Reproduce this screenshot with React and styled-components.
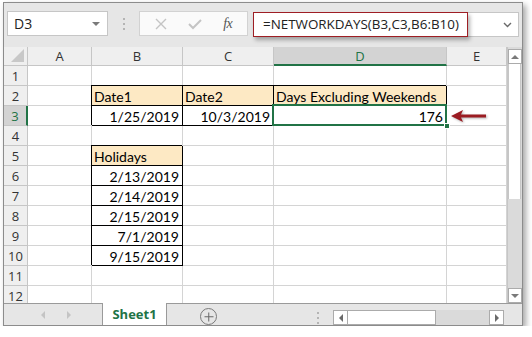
import React from 'react';
import styled, { createGlobalStyle } from 'styled-components';

const GlobalStyle = createGlobalStyle`
  html, body { margin: 0; padding: 0; background: #fff; }
  * { box-sizing: border-box; }
`;

const GREEN = '#217346';
const FILL = '#fde9c4';

const Window = styled.div`
  margin: 2px 0 0 3px;
  width: 520px;
  height: 324px;
  border: 1px solid #8c8c8c;
  background: #e6e6e6;
  box-shadow: 3px 3px 6px rgba(0, 0, 0, 0.35);
  display: flex;
  flex-direction: column;
  overflow: hidden;
  font-family: "Open Sans", sans-serif;
`;

const Toolbar = styled.div`
  height: 44px;
  flex: none;
  display: flex;
  align-items: flex-start;
  padding: 8px 3px 0 3px;
`;

const NameBox = styled.div`
  width: 101px;
  height: 25px;
  background: #fff;
  border: 1px solid #c6c6c6;
  display: flex;
  align-items: center;
  justify-content: space-between;
  padding: 0 7px 0 6px;
  font-size: 14px;
  color: #222;
`;

const Caret = styled.span`
  width: 0;
  height: 0;
  border-left: 4px solid transparent;
  border-right: 4px solid transparent;
  border-top: 4px solid #7a7a7a;
`;

const Grip = styled.div`
  width: 31px;
  height: 25px;
  display: flex;
  flex-direction: column;
  align-items: center;
  justify-content: center;
  gap: 3px;

  span {
    width: 2px;
    height: 2px;
    background: #b4b4b4;
  }
`;

const ButtonsBox = styled.div`
  width: 109px;
  height: 25px;
  background: #fafafa;
  border: 1px solid #d2d2d2;
  display: flex;
  align-items: center;
  justify-content: space-around;
  padding: 0 4px;
`;

const Fx = styled.span`
  font-family: "Liberation Serif", serif;
  font-style: italic;
  font-size: 14px;
  color: #555;
  letter-spacing: -0.5px;
`;

const FormulaBar = styled.div`
  margin-left: 5px;
  margin-top: 1px;
  flex: 1;
  height: 25px;
  background: #fff;
  border: 1px solid #c6c6c6;
  display: flex;
  align-items: center;
`;

const FormulaInput = styled.div`
  width: 215px;
  height: 25px;
  margin: -1px 0 0 -1px;
  border: 1px solid #9e1e24;
  box-shadow: 2px 3px 4px rgba(0, 0, 0, 0.3);
  background: #fff;
  display: flex;
  align-items: center;
  padding-left: 9px;
  font-size: 13.4px;
  color: #222;
  white-space: nowrap;
`;

const Chevron = styled.svg`
  margin-left: auto;
  margin-right: 6px;
`;

const GridArea = styled.div`
  height: 256px;
  flex: none;
  display: flex;
  background: #fff;
`;

const Sheet = styled.div`
  width: 503px;
  display: grid;
  grid-template-columns: 24px 64px 91px 91px 173px 60px;
  grid-template-rows: 19px;
  grid-auto-rows: 20px;
  align-content: start;
  overflow: hidden;
`;

const Corner = styled.div`
  background: #efefef;
  border-right: 1px solid #c6c6c6;
  border-bottom: 1px solid #c6c6c6;
  position: relative;

  &::after {
    content: '';
    position: absolute;
    right: 3px;
    bottom: 3px;
    width: 0;
    height: 0;
    border-left: 13px solid transparent;
    border-bottom: 13px solid #c8c8c8;
  }
`;

const ColHead = styled.div`
  background: ${p => (p.active ? '#d3d3d3' : '#efefef')};
  color: ${p => (p.active ? GREEN : '#333')};
  border-right: 1px solid #c6c6c6;
  border-bottom: ${p => (p.active ? `2px solid ${GREEN}` : '1px solid #c6c6c6')};
  display: flex;
  align-items: center;
  justify-content: center;
  font-size: 13px;
  padding-top: ${p => (p.active ? '1px' : '0')};
`;

const RowHead = styled.div`
  background: ${p => (p.active ? '#d3d3d3' : '#efefef')};
  color: ${p => (p.active ? GREEN : '#333')};
  border-right: ${p => (p.active ? `2px solid ${GREEN}` : '1px solid #c6c6c6')};
  border-bottom: 1px solid #c6c6c6;
  display: flex;
  align-items: center;
  justify-content: center;
  font-size: 13px;
`;

const Cell = styled.div`
  position: relative;
  background: ${p => (p.fill ? FILL : '#fff')};
  border-right: 1px solid ${p => (p.box ? '#000' : '#d4d4d4')};
  border-bottom: 1px solid ${p => (p.box ? '#000' : '#d4d4d4')};
  box-shadow: ${p => (p.box ? '-1px -1px 0 0 #000' : 'none')};
  display: flex;
  align-items: center;
  justify-content: ${p => (p.right ? 'flex-end' : 'flex-start')};
  padding: 2px 3px 0 2px;
  font-family: Lato, "Open Sans", sans-serif;
  font-size: 14px;
  color: #000;
  white-space: nowrap;

  ${p =>
    p.selected &&
    `
    &::after {
      content: '';
      position: absolute;
      left: -2px;
      top: -2px;
      right: -1px;
      bottom: -1px;
      border: 2px solid ${GREEN};
      z-index: 2;
    }
  `}
`;

const FillHandle = styled.span`
  position: absolute;
  right: -4px;
  bottom: -4px;
  width: 6px;
  height: 6px;
  background: ${GREEN};
  border: 1px solid #fff;
  z-index: 3;
`;

const Arrow = styled.svg`
  position: absolute;
  left: 4px;
  top: 4px;
  z-index: 4;
  filter: drop-shadow(1px 1px 1px rgba(0, 0, 0, 0.3));
`;

const VScroll = styled.div`
  width: 15px;
  background: #dadada;
  border-left: 1px solid #c6c6c6;
  display: flex;
  flex-direction: column;
  padding: 2px 1px 0 0;
`;

const ScrollBtn = styled.div`
  flex: none;
  width: ${p => p.w || '14px'};
  height: ${p => p.h || '15px'};
  background: #fff;
  border: 1px solid #ababab;
  display: flex;
  align-items: center;
  justify-content: center;
`;

const VThumb = styled.div`
  height: 135px;
  background: #fff;
  border-left: 1px solid #c6c6c6;
  border-right: 1px solid #c6c6c6;
`;

const VTrack = styled.div`
  flex: 1;
`;

const TabBar = styled.div`
  flex: 1;
  display: flex;
`;

const NavArea = styled.div`
  width: 99px;
  border-top: 1px solid #9a9a9a;
  border-right: 1px solid #9a9a9a;
  display: flex;
  align-items: center;
  justify-content: center;
  gap: 22px;
  padding-left: 6px;
`;

const Tri = styled.span`
  width: 0;
  height: 0;
  border-top: 4px solid transparent;
  border-bottom: 4px solid transparent;
  ${p =>
    p.dir === 'left'
      ? `border-right: 4px solid ${p.color || '#c4c4c4'};`
      : `border-left: 4px solid ${p.color || '#c4c4c4'};`}
`;

const TriV = styled.span`
  width: 0;
  height: 0;
  border-left: 4px solid transparent;
  border-right: 4px solid transparent;
  ${p =>
    p.dir === 'up'
      ? 'border-bottom: 4px solid #7a7a7a;'
      : 'border-top: 4px solid #7a7a7a;'}
`;

const SheetTab = styled.div`
  width: 64px;
  background: #fff;
  border-right: 1px solid #9a9a9a;
  display: flex;
  align-items: center;
  justify-content: center;
  color: ${GREEN};
  font-weight: 700;
  font-size: 13px;
`;

const TabRest = styled.div`
  flex: 1;
  border-top: 1px solid #9a9a9a;
  display: flex;
  align-items: flex-start;
`;

const AddSheet = styled.div`
  margin: 4px 0 0 33px;
  width: 17px;
  height: 17px;
  border: 1px solid #7a7a7a;
  border-radius: 50%;
  position: relative;

  &::before,
  &::after {
    content: '';
    position: absolute;
    background: #6a6a6a;
    left: 50%;
    top: 50%;
    transform: translate(-50%, -50%);
  }
  &::before { width: 9px; height: 1.5px; }
  &::after { width: 1.5px; height: 9px; }
`;

const HGrip = styled.div`
  margin: 8px 0 0 100px;
  display: flex;
  flex-direction: column;
  gap: 3px;

  span {
    width: 2px;
    height: 2px;
    background: #b4b4b4;
  }
`;

const HScroll = styled.div`
  margin: 6px 0 0 14px;
  width: 171px;
  height: 15px;
  display: flex;
  background: #dadada;
`;

const HThumb = styled.div`
  width: 88px;
  background: #fff;
  border: 1px solid #ababab;
  border-left: none;
`;

const HTrack = styled.div`
  flex: 1;
`;

const rows = [
  { n: 1, cells: [{}, {}, {}, {}, {}] },
  {
    n: 2,
    cells: [
      {},
      { t: 'Date1', fill: true, box: true },
      { t: 'Date2', fill: true, box: true },
      { t: 'Days Excluding Weekends', fill: true, box: true },
      {},
    ],
  },
  {
    n: 3,
    cells: [
      {},
      { t: '1/25/2019', right: true, box: true },
      { t: '10/3/2019', right: true, box: true },
      { t: '176', right: true, box: true, selected: true },
      { arrow: true },
    ],
  },
  { n: 4, cells: [{}, {}, {}, {}, {}] },
  { n: 5, cells: [{}, { t: 'Holidays', fill: true, box: true }, {}, {}, {}] },
  ...['2/13/2019', '2/14/2019', '2/15/2019', '7/1/2019', '9/15/2019'].map((d, i) => ({
    n: 6 + i,
    cells: [{}, { t: d, right: true, box: true }, {}, {}, {}],
  })),
  { n: 11, cells: [{}, {}, {}, {}, {}] },
  { n: 12, cells: [{}, {}, {}, {}, {}] },
];

const columns = ['A', 'B', 'C', 'D', 'E'];

const App = () => (
  <>
    <GlobalStyle />
    <Window>
      <Toolbar>
        <NameBox>
          D3
          <Caret />
        </NameBox>
        <Grip>
          <span />
          <span />
          <span />
        </Grip>
        <ButtonsBox>
          <svg width="12" height="12" viewBox="0 0 12 12">
            <path d="M1 1 L11 11 M11 1 L1 11" stroke="#c4c4c4" strokeWidth="1.4" />
          </svg>
          <svg width="14" height="12" viewBox="0 0 14 12">
            <path d="M1 6 L5 10 L13 2" stroke="#c4c4c4" strokeWidth="2" fill="none" />
          </svg>
          <Fx>fx</Fx>
        </ButtonsBox>
        <FormulaBar>
          <FormulaInput>=NETWORKDAYS(B3,C3,B6:B10)</FormulaInput>
          <Chevron width="9" height="6" viewBox="0 0 9 6">
            <path d="M1 1 L4.5 4.5 L8 1" stroke="#6a6a6a" strokeWidth="1.4" fill="none" />
          </Chevron>
        </FormulaBar>
      </Toolbar>

      <GridArea>
        <Sheet>
          <Corner />
          {columns.map(c => (
            <ColHead key={c} active={c === 'D'}>
              {c}
            </ColHead>
          ))}
          {rows.map(row => (
            <React.Fragment key={row.n}>
              <RowHead active={row.n === 3}>{row.n}</RowHead>
              {row.cells.map((c, i) => (
                <Cell
                  key={i}
                  fill={c.fill}
                  box={c.box}
                  right={c.right}
                  selected={c.selected}
                >
                  {c.t}
                  {c.selected && <FillHandle />}
                  {c.arrow && (
                    <Arrow width="36" height="12" viewBox="0 0 36 12">
                      <path d="M0 6 L12 0 L10 4.6 L35 4.6 L35 7.4 L10 7.4 L12 12 Z" fill="#9b1c22" />
                    </Arrow>
                  )}
                </Cell>
              ))}
            </React.Fragment>
          ))}
        </Sheet>
        <VScroll>
          <ScrollBtn>
            <TriV dir="up" />
          </ScrollBtn>
          <VThumb />
          <VTrack />
          <ScrollBtn>
            <TriV dir="down" />
          </ScrollBtn>
        </VScroll>
      </GridArea>

      <TabBar>
        <NavArea>
          <Tri dir="left" />
          <Tri dir="right" />
        </NavArea>
        <SheetTab>Sheet1</SheetTab>
        <TabRest>
          <AddSheet />
          <HGrip>
            <span />
            <span />
            <span />
          </HGrip>
          <HScroll>
            <ScrollBtn w="15px" h="15px">
              <Tri dir="left" color="#6a6a6a" />
            </ScrollBtn>
            <HThumb />
            <HTrack />
            <ScrollBtn w="15px" h="15px">
              <Tri dir="right" color="#6a6a6a" />
            </ScrollBtn>
          </HScroll>
        </TabRest>
      </TabBar>
    </Window>
  </>
);

export default App;
